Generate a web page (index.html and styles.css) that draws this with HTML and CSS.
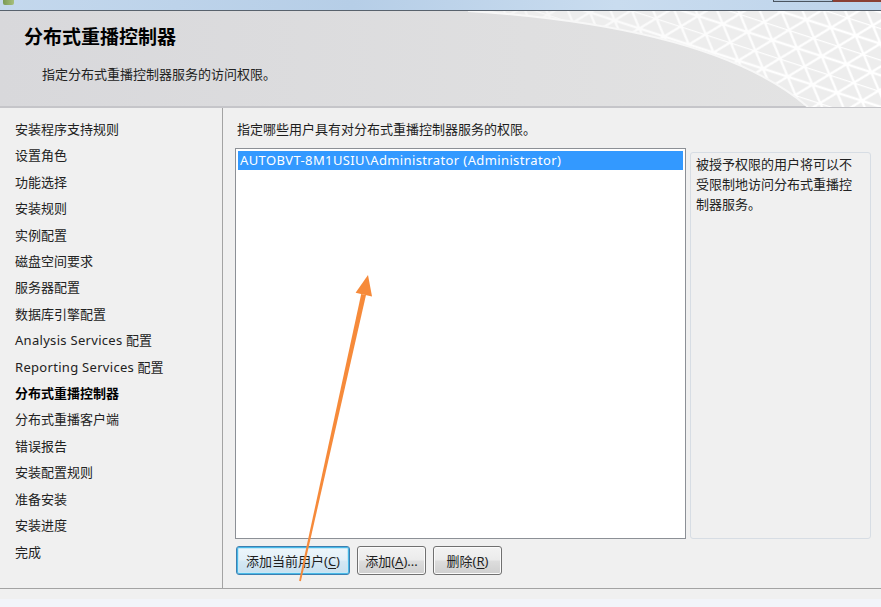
FILE: index.html
```html
<!DOCTYPE html>
<html lang="zh-CN">
<head>
  <meta charset="UTF-8">
  <title>分布式重播控制器</title>
  <link rel="stylesheet" href="styles.css">
</head>
<body>
  <div class="window">
    <div class="titlebar">
      <span class="app-icon"></span>
      <span class="caption-buttons">
        <span class="cap-min"></span>
        <span class="cap-close"></span>
      </span>
    </div>

    <header class="header">
      <svg class="mesh" width="441" height="96" viewBox="0 0 441 96">
        <defs>
          <clipPath id="meshClip">
            <path d="M28,0 Q275,16 368,96 L441,96 L441,0 Z"/>
          </clipPath>
          <pattern id="lattice" width="26" height="30" patternUnits="userSpaceOnUse" patternTransform="rotate(18)">
            <path d="M0,0 L26,0 M0,15 L26,15 M0,0 L26,30 M26,0 L0,30" stroke="#ffffff" stroke-width="2.4" fill="none"/>
          </pattern>
          <linearGradient id="fade" x1="0" y1="0" x2="1" y2="0">
            <stop offset="0" stop-color="#fff" stop-opacity="0.35"/>
            <stop offset="0.5" stop-color="#fff" stop-opacity="0.8"/>
            <stop offset="1" stop-color="#fff" stop-opacity="1"/>
          </linearGradient>
          <mask id="fadeMask" maskUnits="userSpaceOnUse" x="0" y="0" width="441" height="96">
            <rect width="441" height="96" fill="url(#fade)"/>
          </mask>
        </defs>
        <g clip-path="url(#meshClip)">
          <rect width="441" height="96" fill="#ededed"/>
          <g mask="url(#fadeMask)">
            <rect width="441" height="96" fill="url(#lattice)"/>
          </g>
        </g>
        <path d="M28,0 Q275,16 368,96" stroke="#f7f7f7" stroke-width="2" fill="none"/>
      </svg>
      <h1>分布式重播控制器</h1>
      <p>指定分布式重播控制器服务的访问权限。</p>
    </header>

    <div class="content">
      <ul class="steps">
        <li>安装程序支持规则</li>
        <li>设置角色</li>
        <li>功能选择</li>
        <li>安装规则</li>
        <li>实例配置</li>
        <li>磁盘空间要求</li>
        <li>服务器配置</li>
        <li>数据库引擎配置</li>
        <li><span class="latin">Analysis Services</span> 配置</li>
        <li><span class="latin">Reporting Services</span> 配置</li>
        <li class="current">分布式重播控制器</li>
        <li>分布式重播客户端</li>
        <li>错误报告</li>
        <li>安装配置规则</li>
        <li>准备安装</li>
        <li>安装进度</li>
        <li>完成</li>
      </ul>

      <div class="main">
        <p class="hint">指定哪些用户具有对分布式重播控制器服务的权限。</p>
        <div class="panels">
          <div class="user-list">
            <div class="user-row selected">AUTOBVT-8M1USIU\Administrator (Administrator)</div>
          </div>
          <div class="description">被授予权限的用户将可以不受限制地访问分布式重播控制器服务。</div>
        </div>
        <div class="buttons">
          <button class="btn btn-wide focused">添加当前用户(<u>C</u>)</button>
          <button class="btn">添加(<u>A</u>)...</button>
          <button class="btn">删除(<u>R</u>)</button>
        </div>
      </div>
    </div>

    <div class="footer"></div>

    <svg class="arrow" width="881" height="607" viewBox="0 0 881 607">
      <polygon points="300.9,581.2 299.1,580.8 361.2,293.9 366,295" fill="#f68a3a"/>
      <polygon points="368,275 372,296.5 355.6,292.8" fill="#f68a3a"/>
    </svg>
  </div>
</body>
</html>
```

FILE: styles.css
```css
/* Setup wizard page */
body {
  margin: 0;
  background: #f0f0f0;
  font-family: "Noto Sans", "Noto Sans CJK SC", sans-serif;
  color: #1e1e1e;
}

.window {
  position: relative;
  width: 881px;
  height: 607px;
  display: flex;
  flex-direction: column;
  overflow: hidden;
}

/* Title bar strip */
.titlebar {
  height: 10px;
  flex: none;
  display: flex;
  align-items: flex-start;
  background: linear-gradient(to right, #c4d8ed, #b6cee7 40%, #c9dcef 70%, #bdd3ea);
  border-bottom: 1px solid #58626d;
}

.app-icon {
  width: 11px;
  height: 5px;
  margin-left: 3px;
  background: linear-gradient(to right, #7a9a55, #a7bf7c);
  border-radius: 0 0 2px 2px;
}

.caption-buttons {
  margin-left: auto;
  display: flex;
  height: 2px;
}

.cap-min {
  width: 58px;
  border: 1px solid #4b5560;
  border-top: none;
  background: #b5c9dd;
}

.cap-close {
  width: 48px;
  background: #8a3f33;
}

/* Header */
.header {
  position: relative;
  height: 95px;
  flex: none;
  background: linear-gradient(to right, #d8d8db, #dfdfe0 60%, #e4e4e4);
  border-bottom: 2px solid #c5c5c9;
}

.mesh {
  position: absolute;
  top: 0;
  right: 0;
}

.header h1 {
  position: relative;
  margin: 0;
  padding: 14px 0 0 24px;
  font-size: 19px;
  font-weight: bold;
  line-height: 24px;
  color: #000;
}

.header p {
  position: relative;
  margin: 0;
  padding: 16px 0 0 42px;
  font-size: 13px;
  line-height: 18px;
  color: #222;
}

/* Body */
.content {
  height: 480px;
  flex: none;
  display: flex;
}

.steps {
  width: 223px;
  margin: 0;
  padding: 8px 0 0 15px;
  box-sizing: border-box;
  list-style: none;
  border-right: 1px solid #a3a3a3;
  font-size: 13px;
  line-height: 26.4px;
  color: #222;
}

.steps .latin {
  letter-spacing: 0.3px;
}

.steps .current {
  font-weight: bold;
  color: #000;
}

.main {
  flex: 1;
  padding: 12px 0 0 12px;
}

.hint {
  margin: 0;
  padding-left: 2px;
  font-size: 13px;
  line-height: 18px;
}

.panels {
  display: flex;
  margin-top: 10px;
  height: 391px;
}

.user-list {
  width: 451px;
  box-sizing: border-box;
  padding: 2px 2px;
  background: #fff;
  border: 1px solid #8c9096;
}

.user-row {
  height: 19px;
  line-height: 19px;
  padding-left: 2px;
  font-size: 13px;
  letter-spacing: 0.38px;
}

.user-row.selected {
  background: #3399ff;
  color: #fff;
}

.description {
  width: 181px;
  margin: 4px 0 0 4px;
  box-sizing: border-box;
  padding: 1px 9px 1px 5px;
  border: 1px solid #d7dde4;
  border-radius: 3px;
  font-size: 13px;
  line-height: 20px;
  color: #222;
}

.buttons {
  display: flex;
  gap: 7px;
  margin: 7px 0 0 1px;
}

.btn {
  width: 69px;
  height: 29px;
  padding: 0;
  font-family: inherit;
  font-size: 13px;
  color: #1e1e1e;
  border: 1px solid #707070;
  border-radius: 3px;
  background: linear-gradient(to bottom, #f3f3f3 0%, #ebebeb 48%, #dddddd 52%, #cfcfcf 100%);
  box-shadow: inset 0 0 0 1px #fbfbfb;
}

.btn-wide {
  width: 114px;
}

.btn.focused {
  border-color: #3c7fb1;
  box-shadow: inset 0 0 0 1px #48b9e7, inset 0 0 0 2px #c6e8f7;
  background: linear-gradient(to bottom, #edf6fb 0%, #e3f0f8 48%, #d4e8f4 52%, #c8e0ef 100%);
}

.btn u {
  text-underline-offset: 2px;
}

.footer {
  flex: 1;
  border-top: 1px solid #a3a3a3;
  background: linear-gradient(to bottom, #f0f0f0 10px, #f2f4f9 10px);
}

.arrow {
  position: absolute;
  left: 0;
  top: 0;
  pointer-events: none;
}
```
